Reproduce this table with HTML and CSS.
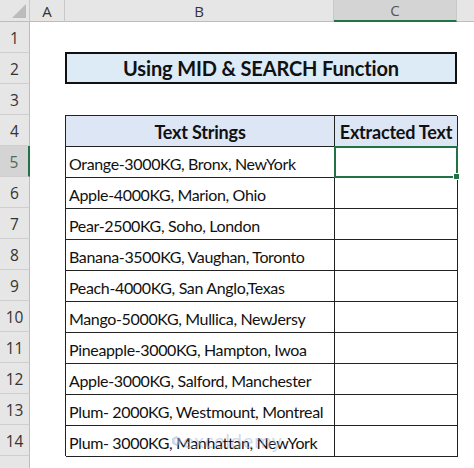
FILE: index.html
```html
<!DOCTYPE html>
<html>
<head>
<meta charset="utf-8">
<link rel="stylesheet" href="styles.css">
</head>
<body>
<div class="sheet">
  <div class="corner"><span class="tri"></span></div>
  <div class="colh">A</div>
  <div class="colh">B</div>
  <div class="colh sel-col">C</div>
  <div class="colh last"></div>

  <div class="rowh r1">1</div>
  <div class="rowh r2">2</div>
  <div class="rowh r3">3</div>
  <div class="rowh r4">4</div>
  <div class="rowh r5 sel-row">5</div>
  <div class="rowh r6">6</div>
  <div class="rowh r7">7</div>
  <div class="rowh r8">8</div>
  <div class="rowh r9">9</div>
  <div class="rowh r10">10</div>
  <div class="rowh r11">11</div>
  <div class="rowh r12">12</div>
  <div class="rowh r13">13</div>
  <div class="rowh r14">14</div>
  <div class="rowh r15"></div>

  <div class="title">Using MID &amp; SEARCH Function</div>

  <div class="table">
    <div class="th">Text Strings</div>
    <div class="th th-c">Extracted Text</div>
    <div class="td">Orange-3000KG, Bronx, NewYork</div>
    <div class="td td-c active"><span class="handle"></span></div>
    <div class="td">Apple-4000KG, Marion, Ohio</div>
    <div class="td td-c"></div>
    <div class="td">Pear-2500KG, Soho, London</div>
    <div class="td td-c"></div>
    <div class="td">Banana-3500KG, Vaughan, Toronto</div>
    <div class="td td-c"></div>
    <div class="td">Peach-4000KG, San Anglo,Texas</div>
    <div class="td td-c"></div>
    <div class="td">Mango-5000KG, Mullica, NewJersy</div>
    <div class="td td-c"></div>
    <div class="td">Pineapple-3000KG, Hampton, Iwoa</div>
    <div class="td td-c"></div>
    <div class="td">Apple-3000KG, Salford, Manchester</div>
    <div class="td td-c"></div>
    <div class="td">Plum- 2000KG, Westmount, Montreal</div>
    <div class="td td-c"></div>
    <div class="td">Plum- 3000KG, Manhattan, NewYork</div>
    <div class="td td-c"></div>
    <div class="watermark">
      <svg class="wm-icon" width="16" height="18" viewBox="0 0 16 18"><path d="M8 0 L16 4.5 L16 13.5 L8 18 L0 13.5 L0 4.5 Z" fill="#9fb0cf"/><path d="M4.5 6.5 L8 4.5 L11.5 6.5 L11.5 11.5 L8 13.5 L4.5 11.5 Z" fill="#ffffff" opacity="0.75"/></svg>
      <span class="wm-text">exceldemy</span>
    </div>
  </div>
</div>
</body>
</html>
```

FILE: styles.css
```css
html, body {
  margin: 0;
  padding: 0;
  background: #ffffff;
}
body {
  font-family: Lato, "Open Sans", sans-serif;
  color: #111;
  overflow: hidden;
}
.sheet {
  display: grid;
  grid-template-columns: 30px 35px 269px 123px 17px;
  grid-template-rows: 22px repeat(14, 31px) 12px;
  width: 474px;
  height: 468px;
}
.corner {
  grid-column: 1;
  grid-row: 1;
  background: #e6e6e6;
  border-right: 1px solid #c8c8c8;
  border-bottom: 1px solid #bdbdbd;
  position: relative;
  box-sizing: border-box;
}
.tri {
  position: absolute;
  right: 3px;
  bottom: 3px;
  width: 0;
  height: 0;
  border-left: 14px solid transparent;
  border-bottom: 14px solid #bcbcbc;
}
.colh {
  grid-row: 1;
  background: #e6e6e6;
  border-right: 1px solid #c8c8c8;
  border-bottom: 1px solid #bdbdbd;
  box-sizing: border-box;
  display: flex;
  align-items: center;
  justify-content: center;
  font-family: "Open Sans", sans-serif;
  font-size: 15px;
  color: #333;
}
.colh.sel-col {
  background: #d4d4d4;
  color: #555;
  border-bottom: 2px solid #217346;
}
.colh.last {
  border-right: none;
}
.rowh {
  grid-column: 1;
  background: #e6e6e6;
  border-right: 1px solid #bdbdbd;
  border-bottom: 1px solid #cfcfcf;
  box-sizing: border-box;
  display: flex;
  align-items: center;
  justify-content: center;
  font-family: "Open Sans", sans-serif;
  font-size: 15.5px;
  color: #333;
  padding-top: 2px;
}
.rowh.sel-row {
  background: #d4d4d4;
  color: #4f6b5a;
  border-right: 2px solid #217346;
}
.r1 { grid-row: 2; }
.r2 { grid-row: 3; }
.r3 { grid-row: 4; }
.r4 { grid-row: 5; }
.r5 { grid-row: 6; }
.r6 { grid-row: 7; }
.r7 { grid-row: 8; }
.r8 { grid-row: 9; }
.r9 { grid-row: 10; }
.r10 { grid-row: 11; }
.r11 { grid-row: 12; }
.r12 { grid-row: 13; }
.r13 { grid-row: 14; }
.r14 { grid-row: 15; }
.r15 { grid-row: 16; border-bottom: none; }

.title {
  grid-column: 3 / 5;
  grid-row: 3;
  background: #ddebf7;
  border: 2px solid #111;
  box-sizing: border-box;
  margin-top: -1px;
  display: flex;
  align-items: center;
  justify-content: center;
  font-weight: 700;
  font-size: 20px;
  letter-spacing: -0.15px;
  color: #111;
}

.table {
  grid-column: 3 / 5;
  grid-row: 5 / 16;
  display: grid;
  grid-template-columns: 269px 123px;
  grid-auto-rows: 31px;
  border-top: 1px solid #222;
  border-left: 1px solid #222;
  box-sizing: border-box;
  position: relative;
}
.th, .td {
  border-right: 1px solid #222;
  border-bottom: 1px solid #222;
  box-sizing: border-box;
  display: flex;
  align-items: center;
  color: #111;
  padding-top: 2px;
}
.td {
  font-size: 16px;
  letter-spacing: -0.35px;
}
.th {
  background: #dde6f4;
  font-weight: 700;
  font-size: 18px;
  letter-spacing: -0.2px;
  justify-content: center;
}
.td {
  padding-left: 3px;
  white-space: nowrap;
}
.td-c {
  padding-left: 0;
}
.active {
  position: relative;
  border: 2px solid #217346;
  margin-top: -1px;
  margin-left: -1px;
  height: 32px;
}
.handle {
  position: absolute;
  right: -4px;
  bottom: -4px;
  width: 5px;
  height: 5px;
  background: #217346;
  border: 1px solid #fff;
}
.watermark {
  position: absolute;
  left: 106px;
  top: 313px;
  width: 110px;
  height: 24px;
  opacity: 0.5;
  display: flex;
  align-items: center;
  gap: 2px;
  pointer-events: none;
}
.wm-text {
  font-family: "Open Sans", sans-serif;
  font-size: 19px;
  color: #9fb0cf;
  letter-spacing: 0.5px;
  line-height: 1;
}
```
